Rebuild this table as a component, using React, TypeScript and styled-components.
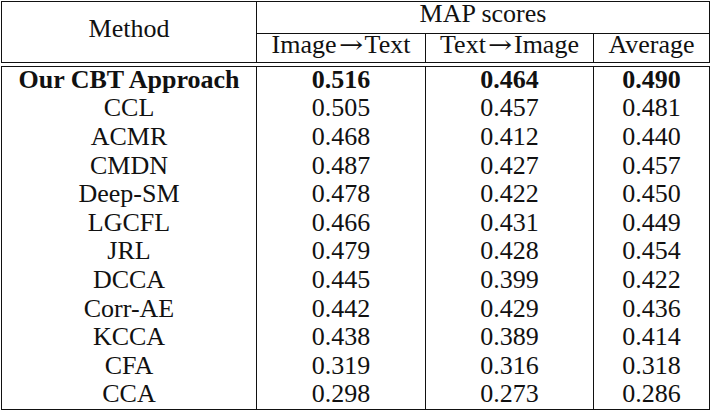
import React from "react";
import styled, { createGlobalStyle } from "styled-components";

const GlobalStyle = createGlobalStyle`
  html, body {
    margin: 0;
    padding: 0;
    background: #ffffff;
  }
`;

const Page = styled.div`
  padding: 1px 0 0 1px;
  font-family: "Liberation Serif", "Times New Roman", serif;
  color: #111;
`;

const Table = styled.table`
  border-collapse: collapse;
  table-layout: fixed;
  width: 709px;
  font-size: 26px;
`;

const HeadCell = styled.th<{ $top?: boolean; $height: number }>`
  box-sizing: border-box;
  font-weight: normal;
  padding: 0 0 7px;
  height: ${(p) => p.$height}px;
  line-height: 20px;
  text-align: center;
  vertical-align: middle;
  border: 1px solid #111;
  border-top-width: ${(p) => (p.$top ? "1px" : "0")};
`;

const Arrow = styled.span`
  font-family: "DejaVu Serif", serif;
  font-size: 24px;
  display: inline-block;
  transform: scaleX(1.2);
  margin: 0 4px;
`;

const SpacerCell = styled.td`
  height: 3px;
  padding: 0;
  border: none;
`;

const Cell = styled.td<{ $bold?: boolean; $last?: boolean; $first?: boolean }>`
  box-sizing: border-box;
  height: 28.6px;
  padding: 0 0 2px;
  line-height: 1;
  text-align: center;
  vertical-align: middle;
  font-weight: ${(p) => (p.$bold ? "bold" : "normal")};
  border-left: 1px solid #111;
  border-right: 1px solid #111;
  border-top: ${(p) => (p.$first ? "1px solid #111" : "none")};
  border-bottom: ${(p) => (p.$last ? "1px solid #111" : "none")};
`;

interface Row {
  method: string;
  i2t: string;
  t2i: string;
  avg: string;
}

const rows: Row[] = [
  { method: "Our CBT Approach", i2t: "0.516", t2i: "0.464", avg: "0.490" },
  { method: "CCL", i2t: "0.505", t2i: "0.457", avg: "0.481" },
  { method: "ACMR", i2t: "0.468", t2i: "0.412", avg: "0.440" },
  { method: "CMDN", i2t: "0.487", t2i: "0.427", avg: "0.457" },
  { method: "Deep-SM", i2t: "0.478", t2i: "0.422", avg: "0.450" },
  { method: "LGCFL", i2t: "0.466", t2i: "0.431", avg: "0.449" },
  { method: "JRL", i2t: "0.479", t2i: "0.428", avg: "0.454" },
  { method: "DCCA", i2t: "0.445", t2i: "0.399", avg: "0.422" },
  { method: "Corr-AE", i2t: "0.442", t2i: "0.429", avg: "0.436" },
  { method: "KCCA", i2t: "0.438", t2i: "0.389", avg: "0.414" },
  { method: "CFA", i2t: "0.319", t2i: "0.316", avg: "0.318" },
  { method: "CCA", i2t: "0.298", t2i: "0.273", avg: "0.286" },
];

export default function App() {
  return (
    <Page>
      <GlobalStyle />
      <Table>
        <colgroup>
          <col style={{ width: 255 }} />
          <col style={{ width: 169 }} />
          <col style={{ width: 168 }} />
          <col style={{ width: 116 }} />
        </colgroup>
        <thead>
          <tr>
            <HeadCell $top $height={32} rowSpan={2}>
              Method
            </HeadCell>
            <HeadCell $top $height={32} colSpan={3}>
              MAP scores
            </HeadCell>
          </tr>
          <tr>
            <HeadCell $height={29}>
              Image<Arrow>→</Arrow>Text
            </HeadCell>
            <HeadCell $height={29}>
              Text<Arrow>→</Arrow>Image
            </HeadCell>
            <HeadCell $height={29}>Average</HeadCell>
          </tr>
          <tr>
            <SpacerCell colSpan={4} />
          </tr>
        </thead>
        <tbody>
          {rows.map((r, i) => {
            const bold = i === 0;
            const first = i === 0;
            const last = i === rows.length - 1;
            return (
              <tr key={r.method}>
                <Cell $bold={bold} $first={first} $last={last}>
                  {r.method}
                </Cell>
                <Cell $bold={bold} $first={first} $last={last}>
                  {r.i2t}
                </Cell>
                <Cell $bold={bold} $first={first} $last={last}>
                  {r.t2i}
                </Cell>
                <Cell $bold={bold} $first={first} $last={last}>
                  {r.avg}
                </Cell>
              </tr>
            );
          })}
        </tbody>
      </Table>
    </Page>
  );
}
